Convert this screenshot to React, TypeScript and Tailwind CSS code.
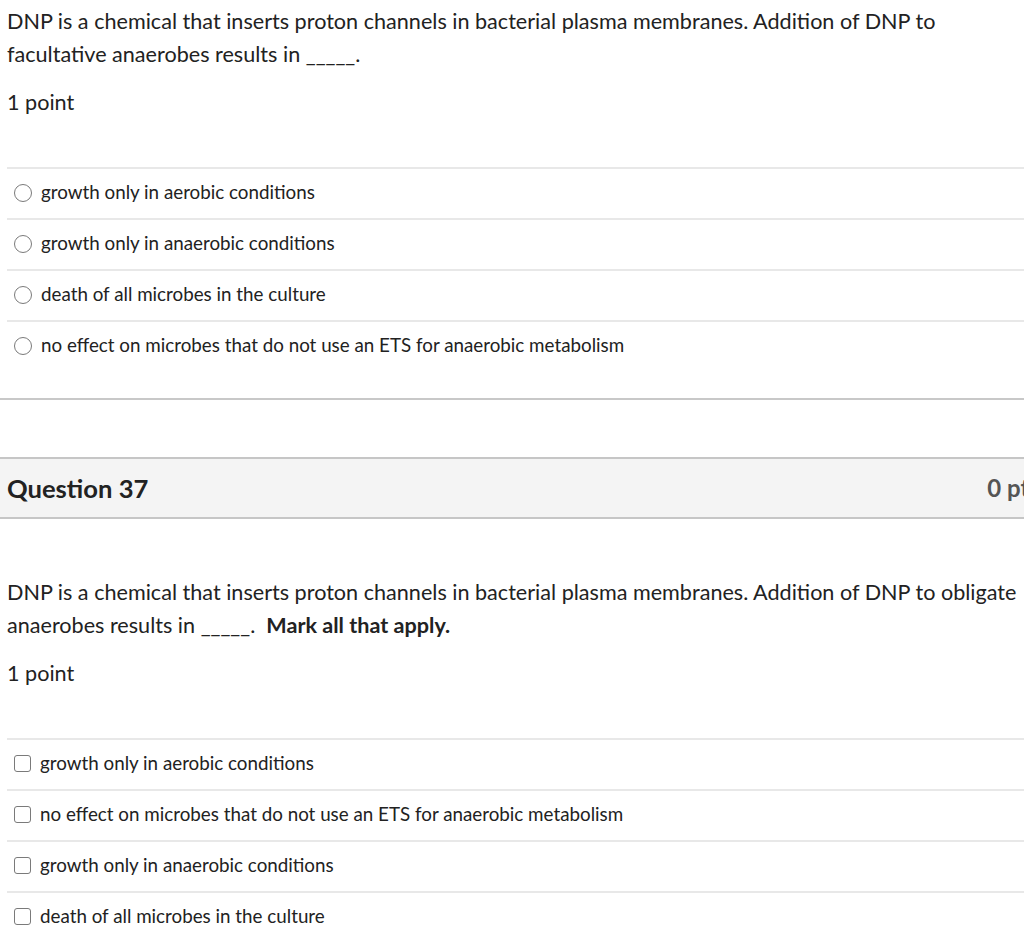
import React from "react";

function Radio() {
  return <span className="inline-block w-[18px] h-[18px] rounded-full border border-[#7a7a7a] bg-white shrink-0" />;
}
function Check() {
  return <span className="inline-block w-[17px] h-[17px] rounded-[3px] border-[1.5px] border-[#7a7a7a] bg-white shrink-0" />;
}

function Option({ text, kind, last }: { text: string; kind: "radio" | "check"; last?: boolean }) {
  return (
    <div className={"border-t-2 border-[#e8e8e8] flex items-start pl-[7px] " + (last ? "h-[78px] pt-[15px]" : "h-[51px] pt-[15px]")}>
      {kind === "radio" ? <Radio /> : <Check />}
      <span className="ml-[9px] text-[18.8px] leading-[20px] -mt-[2px]">{text}</span>
    </div>
  );
}

export default function App() {
  return (
    <div className="w-[1024px] overflow-hidden bg-white text-[#222] font-['Lato',sans-serif]">
      <div className="w-[1060px]">
        <div className="pt-[5px] pl-[7px]">
          <p className="w-[1020px] text-[21.6px] leading-[33px]">
            DNP is a chemical that inserts proton channels in bacterial plasma membranes. Addition of DNP to facultative anaerobes results in _____.
          </p>
          <p className="mt-[15px] text-[21.6px] leading-[33px]">1 point</p>
        </div>
        <div className="mt-[48px] ml-[7px]">
          <Option kind="radio" text="growth only in aerobic conditions" />
          <Option kind="radio" text="growth only in anaerobic conditions" />
          <Option kind="radio" text="death of all microbes in the culture" />
          <Option kind="radio" text="no effect on microbes that do not use an ETS for anaerobic metabolism" last />
        </div>
        <div className="border-t-2 border-[#c8c8c8] h-[59px]" />
        <div className="h-[62px] border-y-2 border-[#c6c6c6] bg-[#f4f4f4] flex items-center justify-between pl-[7px] pr-[20px]">
          <span className="text-[25.6px] font-bold">Question 37</span>
          <span className="text-[24px] font-bold text-[#555]">0 pts</span>
        </div>
        <div className="pt-[57px] pl-[7px]">
          <p className="w-[1020px] text-[21.6px] leading-[33px]">
            DNP is a chemical that inserts proton channels in bacterial plasma membranes. Addition of DNP to obligate anaerobes results in <span>_____.</span>{"\u00a0\u00a0"}<b className="font-bold">Mark all that apply.</b>
          </p>
          <p className="mt-[15px] text-[21.6px] leading-[33px]">1 point</p>
        </div>
        <div className="mt-[48px] ml-[7px]">
          <Option kind="check" text="growth only in aerobic conditions" />
          <Option kind="check" text="no effect on microbes that do not use an ETS for anaerobic metabolism" />
          <Option kind="check" text="growth only in anaerobic conditions" />
          <Option kind="check" text="death of all microbes in the culture" last />
        </div>
      </div>
    </div>
  );
}
